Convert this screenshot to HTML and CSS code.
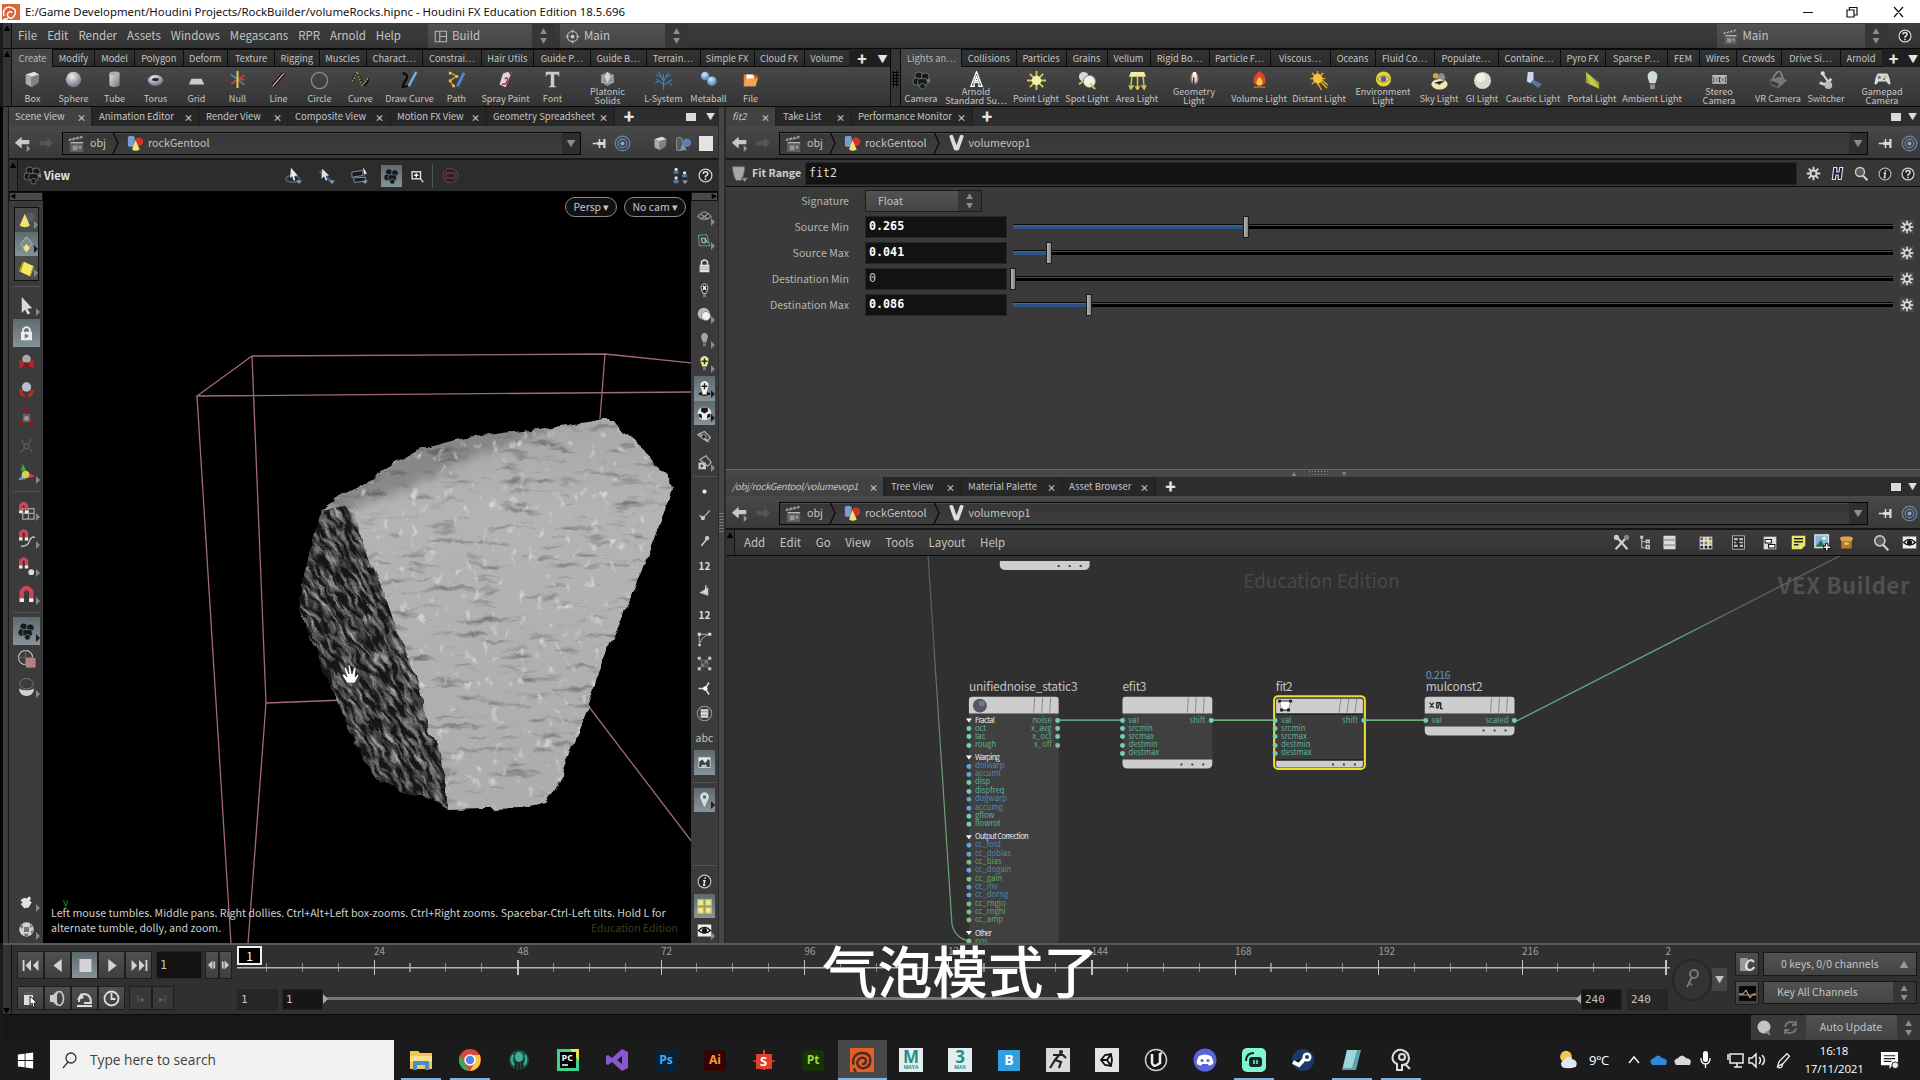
FILE: index.html
```
<!DOCTYPE html>
<html lang="en">
<head>
<meta charset="utf-8">
<title>volumeRocks.hipnc - Houdini FX</title>
<link rel="stylesheet" href="styles.css">
</head>
<body>
<svg class="sprite" width="0" height="0" aria-hidden="true">
<defs>
<linearGradient id="gGrey" x1="0" y1="0" x2="1" y2="1"><stop offset="0" stop-color="#e4e6ea"/><stop offset="1" stop-color="#6e7278"/></linearGradient>
<radialGradient id="gBall" cx=".4" cy=".3" r=".7"><stop offset="0" stop-color="#eef0f4"/><stop offset="1" stop-color="#6f757e"/></radialGradient>
<radialGradient id="gBlue" cx=".4" cy=".3" r=".7"><stop offset="0" stop-color="#d4e6ff"/><stop offset="1" stop-color="#4f7fb8"/></radialGradient>
</defs>
<symbol id="box" viewBox="0 0 20 20"><path fill="#dfe2e4" d="M2 4l10-3 6 3-9 3z"/><path fill="#a9adb0" d="M2 4l7 3v12l-7-4z"/><path fill="#7c8286" d="M9 7l9-3-1 10-8 5z"/></symbol>
<symbol id="sphere" viewBox="0 0 20 20"><circle cx="10" cy="10" r="9" fill="url(#gBall)"/></symbol>
<symbol id="tube" viewBox="0 0 20 20"><path fill="url(#gGrey)" d="M4 3v14q6 4 12 0V3z"/><ellipse cx="10" cy="3" rx="6" ry="2.4" fill="#aab0b6"/></symbol>
<symbol id="torus" viewBox="0 0 20 20"><ellipse cx="10" cy="11" rx="9" ry="6.500" fill="url(#gBall)"/><ellipse cx="10" cy="10" rx="4" ry="2" fill="#262b4a"/></symbol>
<symbol id="grid" viewBox="0 0 20 20"><path fill="#c9ccce" d="M4 9h12l3 7H1z"/></symbol>
<symbol id="null" viewBox="0 0 20 20"><path stroke="#4a84c8" stroke-width="2" d="M2 4l16 12M3 15l5-4"/><path stroke="#c33b3b" stroke-width="2.4" d="M18 5L3 15M10 10h8"/><path stroke="#d8cf40" stroke-width="2.4" d="M10 0v20"/></symbol>
<symbol id="line" viewBox="0 0 20 20"><path stroke="#63333a" stroke-width="1" d="M2 2h15M2 7h15M2 12h15M2 18h15M2 2v16M7 2v16M17 2v16"/><path stroke="#0c0c0c" stroke-width="4" d="M3 18L16 3"/><path stroke="#d9c9c9" stroke-width="1.4" d="M3 18L16 3"/></symbol>
<symbol id="circle" viewBox="0 0 20 20"><circle cx="10" cy="10" r="8.500" fill="none" stroke="#8b9096" stroke-width="1.3"/></symbol>
<symbol id="curve" viewBox="0 0 20 20"><path fill="none" stroke="#0e0e0e" stroke-width="2" d="M0 12Q5-4 10 10T20 8"/><path fill="none" stroke="#bba53c" stroke-dasharray="2 1.5" stroke-width="1.6" d="M0 12L6 1l6 16 8-10"/></symbol>
<symbol id="draw" viewBox="0 0 20 20"><path fill="none" stroke="#0a0a0a" stroke-width="2.4" d="M2 2q8 3 4 8t-4 9l8-2"/><path stroke="#4f8bd0" stroke-width="3.4" d="M18 1L9 18"/><path stroke="#b5d0ee" d="M18 1L9 18"/></symbol>
<symbol id="path" viewBox="0 0 20 20"><path fill="none" stroke="#d0a838" stroke-width="1.5" d="M3 2l7 4-8 6 5 6"/><path fill="#f0c440" d="M1 1h3v3H1zM9 5h3v3H9zM1 10h3v3H1zM5 16h3v3H5z"/><path stroke="#4f8bd0" stroke-width="3.2" d="M19 2l-8 16"/></symbol>
<symbol id="spray" viewBox="0 0 20 20"><path fill="#d8d8da" d="M7 3l6-2 3 4-6 14-7-3z"/><path fill="none" stroke="#c43040" stroke-width="2" d="M9 9q5-2 3 3t-6 3M15 1l3 3"/></symbol>
<symbol id="font" viewBox="0 0 20 20"><path fill="#c9ccd0" d="M2 1h16v6l-2-3h-4v13l3 2H5l3-2V4H4L2 7z"/></symbol>
<symbol id="platonic" viewBox="0 0 20 20"><path fill="#8d9194" d="M10 1l8 4v9l-8 5-8-5V5z"/><path fill="#d2d5d7" d="M10 1l4 6H6zM6 7h8l-4 8z"/><path fill="none" stroke="#c9c9c9" stroke-width=".7" d="M2 5l4 2-4 7 8 1 8-1-4-7 4-2"/></symbol>
<symbol id="lsys" viewBox="0 0 20 20"><path fill="none" stroke="#3d7fc0" stroke-width="1.2" d="M10 20v-9L5 1m5 10l5-9M10 14L2 8m8 7l9-6M7 6L2 4m11 2l5-2M10 11V3M5 10L1 13m14-1l4 3"/></symbol>
<symbol id="meta" viewBox="0 0 20 20"><circle cx="6" cy="6" r="5" fill="url(#gBlue)"/><circle cx="14" cy="12" r="5.600" fill="url(#gBlue)"/></symbol>
<symbol id="file" viewBox="0 0 20 20"><path fill="#e28630" d="M2 4h6l2 2h8l-2 12H2z"/><path fill="#fff" d="M5 4h9l1 9-9 1z"/><path fill="#f0a458" d="M2 18l2-9 15-1-3 10z"/><path fill="#e04c28" d="M12 3l7 3-3 4z"/></symbol>
<symbol id="cam" viewBox="0 0 20 20"><g fill="#15191c" stroke="#7c888e" stroke-width=".8"><circle cx="7" cy="5" r="4"/><circle cx="14" cy="6" r="4"/><circle cx="5" cy="11" r="4"/><rect x="6" y="8" width="10" height="7" rx="2"/><circle cx="11" cy="16" r="3"/></g><path fill="#727d82" d="M15 10l4-2v5z"/></symbol>
<symbol id="arnold" viewBox="0 0 20 20"><path fill="#080808" stroke="#fff" stroke-width="1.7" d="M10 1l7 18h-4v-5H7v5H3zM10 7l-2 5h4z"/></symbol>
<symbol id="sun" viewBox="0 0 20 20"><g stroke="#cfc950" stroke-width="2"><path d="M10 0v20M0 10h20M3 3l14 14M17 3L3 17"/></g><circle cx="10" cy="10" r="5" fill="#f1efa8"/></symbol>
<symbol id="spot" viewBox="0 0 20 20"><circle cx="6" cy="6" r="5" fill="#d8d8d8"/><circle cx="12" cy="11" r="6.400" fill="#f1f1ea" stroke="#7b7b7b"/><path stroke="#c9c94a" stroke-width="2" d="M13 13l5 6M1 14l4-3"/></symbol>
<symbol id="area" viewBox="0 0 20 20"><path fill="#f1eca0" d="M3 1h14l2 5H1z"/><path fill="none" stroke="#cfc64c" stroke-width="1.600" d="M4 6L3 18M10 6v13M16 6l1 12M1 15l2 4 3-4M8 16l2 4 2-4M14 15l3 4 2-4"/></symbol>
<symbol id="geo" viewBox="0 0 20 20"><ellipse cx="10" cy="9" rx="5" ry="8" fill="#ae7c80"/><ellipse cx="10" cy="8" rx="3" ry="6" fill="#f2e8c8"/><path stroke="#2b3972" stroke-width="2" d="M9 8v10"/><circle cx="10" cy="3" r="2" fill="#fff"/></symbol>
<symbol id="fire" viewBox="0 0 20 20"><path fill="#e0482a" d="M10 0q8 5 6 13-6 5-12 0Q2 6 10 0z"/><path fill="#f7c94a" d="M10 6q4 4 3 8-3 3-6 0-1-4 3-8z"/><path fill="#a9683f" d="M4 16h12v2H4z"/></symbol>
<symbol id="distant" viewBox="0 0 20 20"><path stroke="#d6a42c" stroke-width="1.6" d="M8 0v15M0 8h16M2 2l16 16M14 2L2 14M12 9l7 6M8 12l4 8"/><circle cx="8" cy="8" r="5" fill="#f5c542"/></symbol>
<symbol id="env" viewBox="0 0 20 20"><circle cx="10" cy="10" r="9.500" fill="#e2d43c"/><path fill="#ded9a6" stroke="#7b7430" d="M2 10q8-8 16 0-8 8-16 0z"/><circle cx="10" cy="10" r="3.400" fill="#59607a"/></symbol>
<symbol id="sky" viewBox="0 0 20 20"><circle cx="6" cy="5" r="3" fill="#e79a38"/><path fill="#8b8f94" d="M8 9q0-7 4-7t4 7z"/><ellipse cx="10" cy="14" rx="8.500" ry="5.500" fill="#efe6b4"/><path stroke="#5c5c50" stroke-width="1.4" d="M5 12l5 2 5-4"/></symbol>
<symbol id="gi" viewBox="0 0 20 20"><circle cx="10" cy="10" r="9" fill="#d5dbcf"/><circle cx="8" cy="7" r="5" fill="#eef0e8"/></symbol>
<symbol id="caustic" viewBox="0 0 20 20"><path fill="#cdd8ee" d="M4 1h6v9l-3 3-4-2z"/><path fill="#5a73a3" d="M7 12l3-3 9 5-4 4z"/></symbol>
<symbol id="portal" viewBox="0 0 20 20"><path fill="#9ba53a" d="M3 1l14 11v7L3 12z"/><path fill="#c3ca50" d="M3 1l6 5 8 12-10-4z"/></symbol>
<symbol id="bulb" viewBox="0 0 20 20"><path fill="#cfdcdc" d="M10 0q6 1 5 7-1 3-2 6H7q-1-3-2-6-1-6 5-7z"/><path fill="#8d8f90" d="M7.500 14h5v5h-5z"/></symbol>
<symbol id="stereo" viewBox="0 0 20 20"><path fill="#b8bbbd" d="M1 5h18v11H1z"/><path fill="#2b2d2f" d="M2 8h16v6H2z"/><circle cx="6" cy="11" r="3" fill="#888d90" stroke="#ddd"/><circle cx="14" cy="11" r="3" fill="#888d90" stroke="#ddd"/></symbol>
<symbol id="vr" viewBox="0 0 20 20"><path fill="none" stroke="#85888a" stroke-width="1.6" d="M4 8q6-12 9-5l2 5"/><path fill="#74797c" d="M1 9l11-3 7 4-9 8-8-3z"/><path fill="#3d4042" d="M2 10l8 3v4l-8-3z"/></symbol>
<symbol id="switch" viewBox="0 0 20 20"><circle cx="6" cy="2.500" r="2.200" fill="#ddd"/><path stroke="#d6d6d6" stroke-width="2" d="M6 3l7 10"/><path fill="none" stroke="#cfcfcf" stroke-width="3" d="M3 12q6 5 12-4"/><circle cx="12" cy="15" r="4" fill="#bbb"/></symbol>
<symbol id="pad" viewBox="0 0 20 20"><path fill="#d9dadb" d="M4 3h12q3 4 4 13-2 3-5-3H5q-3 6-5 3Q1 7 4 3z"/><circle cx="6" cy="8" r="2" fill="#77797b"/><circle cx="14" cy="7" r="1.500" fill="#e6a33c"/><circle cx="12" cy="10" r="1.500" fill="#77797b"/></symbol>
<symbol id="back" viewBox="0 0 20 20"><path fill="#c8c8c8" d="M1 9l8-7v4h9v5H9v5z"/><path fill="#9a9a9a" d="M15 12l4 4-4 4z"/></symbol>
<symbol id="fwd" viewBox="0 0 20 20"><path fill="#5a5a5a" d="M19 9l-7-6v4H3v5h9v4z"/></symbol>
<symbol id="clap" viewBox="0 0 20 20"><path fill="#5e5e5e" d="M2 5l14-3 1 3L3 8zM3 9h14v10H3z"/><path stroke="#b9b9b9" stroke-width="1.3" d="M2 7l2-2M6 6l2-2M10 5l2-2M14 4l2-2M4 9h13"/><path fill="#969696" d="M6 12h5v5H6zM12 13l3-1v4l-3-1z"/></symbol>
<symbol id="gprim" viewBox="0 0 20 20"><path fill="#7b9ccc" d="M1 2q4-2 8 0v11q-4 2-8 0z"/><circle cx="14" cy="8" r="5" fill="#d33329"/><path fill="#f3e27a" d="M10 6l5 11q-5 3-9 0z"/></symbol>
<symbol id="vee" viewBox="0 0 20 20"><path fill="none" stroke="#dcdcdc" stroke-width="4.500" stroke-linejoin="round" stroke-linecap="round" d="M4 2l5 14h2L16 2"/></symbol>
<symbol id="pin" viewBox="0 0 20 20"><path fill="#d8d8d8" d="M1 9h6V8h2V4h2v4h4V4h3v12h-3v-4h-4v4H9v-4H7v-1H1z"/></symbol>
<symbol id="target" viewBox="0 0 20 20"><g fill="none" stroke="#6580a0" stroke-width="1.600"><circle cx="10" cy="10" r="8.500"/><circle cx="10" cy="10" r="5"/></g><circle cx="10" cy="10" r="2.300" fill="#82a8d2"/></symbol>
<symbol id="help" viewBox="0 0 20 20"><circle cx="10" cy="10" r="8.500" fill="#242424" stroke="#d4d4d4" stroke-width="1.700"/><path fill="none" stroke="#e4e4e4" stroke-width="2.200" d="M7 8q0-3 3-3t3 2.500q0 2-3 3.500v1.500M10 14v2"/></symbol>
<symbol id="info" viewBox="0 0 20 20"><circle cx="10" cy="10" r="8.500" fill="#242424" stroke="#c4c4c4" stroke-width="1.500"/><path fill="none" stroke="#e4e4e4" stroke-width="2" d="M11 4.500l-.5 2M8 9h2.500L9 15h2"/></symbol>
<symbol id="gear" viewBox="0 0 20 20"><path stroke="#d6d6d6" stroke-width="2.500" d="M10 1v18M1 10h18M3.600 3.600l12.800 12.800M16.400 3.600L3.600 16.400"/><circle cx="10" cy="10" r="4" fill="#3a3a3a" stroke="#d6d6d6" stroke-width="2.500"/></symbol>
<symbol id="hlogo" viewBox="0 0 20 20"><path fill="#13213f" stroke="#dfe3ea" stroke-width="1.500" d="M3 18L5 2h4v6h3l1-6h4l-2 16h-4v-6H8l-1 6z"/></symbol>
<symbol id="mag" viewBox="0 0 20 20"><circle cx="8" cy="8" r="6" fill="#5a5a5a" stroke="#d0d0d0" stroke-width="1.800"/><path stroke="#d8d8d8" stroke-width="2.500" d="M12 13l6 6"/></symbol>
<symbol id="layout" viewBox="0 0 20 20"><path fill="none" stroke="#b4b4b4" stroke-width="1.500" d="M3 3h15v14H3zM9 3v14M9 10h9"/></symbol>
<symbol id="radial" viewBox="0 0 20 20"><circle cx="10" cy="10" r="7" fill="none" stroke="#b4b4b4" stroke-width="1.400"/><circle cx="10" cy="10" r="2.500" fill="#ccc"/><path stroke="#b4b4b4" stroke-width="2" d="M10 1v4M10 15v4M1 10h4M15 10h4"/></symbol>
<symbol id="orbit" viewBox="0 0 20 20"><ellipse cx="9" cy="14" rx="8" ry="4" fill="none" stroke="#45618a" stroke-width="2"/><path fill="#e8e8e8" d="M7 1l8 9-4 .5 1 5-2 .5-1.500-5L6 13z"/><path fill="#999" d="M13 16h7l-3.500 4z"/></symbol>
<symbol id="diag" viewBox="0 0 20 20"><path stroke="#3c5f88" stroke-width="3" d="M2 5l15 13"/><path fill="#e0e0e0" d="M5 2l8 8-4 .5 2 5-2 .5-2-5-3 3z"/><path fill="#999" d="M13 16h7l-3.500 4z"/></symbol>
<symbol id="shelf" viewBox="0 0 20 20"><path fill="#171c22" stroke="#8ba0b0" d="M1 6l13-2v6L1 12zM3 13l14-1v5l-13 1z"/><path fill="#e8e8e8" d="M14 0l5 8h-3v4z"/><path fill="#999" d="M13 16h7l-3.500 4z"/></symbol>
<symbol id="zoomf" viewBox="0 0 20 20"><path fill="#e2e2e2" d="M2 3h14v12H2z"/><path fill="#222" d="M4 5h10v8H4z"/><path stroke="#fff" stroke-width="2" d="M9 6v6M6 9h6"/><path stroke="#ccc" stroke-width="2" d="M15 14l4 5"/></symbol>
<symbol id="stopc" viewBox="0 0 20 20"><circle cx="10" cy="10" r="8.500" fill="#2b2224" stroke="#633a40" stroke-width="1.500"/><path fill="none" stroke="#633a40" stroke-width="1.700" d="M5 7h10v6H5z"/></symbol>
<symbol id="people" viewBox="0 0 20 20"><g fill="#d6dde6"><circle cx="6" cy="3" r="2"/><circle cx="16" cy="7" r="2"/><circle cx="6" cy="13" r="2"/></g><path fill="#4d79ae" d="M3 5h6v3H3zM13 9h6v3h-6zM3 15h6v4H3z"/><path fill="#999" d="M13 16h7l-3.500 4z"/></symbol>
<symbol id="ghost" viewBox="0 0 20 20"><path fill="#565a5c" stroke="#9a9fa2" d="M2 4q3-3 6 0l2 8-2 6H2z"/><circle cx="14" cy="9" r="5" fill="#5b7fb0"/><path fill="#8e9396" d="M9 10l5 8H6z"/></symbol>
<symbol id="funnel" viewBox="0 0 20 20"><path fill="#a7a7a7" stroke="#6b6b6b" d="M2 2h14v4l-2 8-2 4H6l-2-4-2-8z"/><path fill="#999" stroke="#333" stroke-width=".6" d="M12 15h8l-4 5z"/></symbol>
<symbol id="cone" viewBox="0 0 20 20"><circle cx="14" cy="6" r="5.500" fill="#555b60"/><path fill="#f0e470" d="M8 2l6 14q-6 4-12 0z"/></symbol>
<symbol id="diam" viewBox="0 0 20 20"><path fill="#7d8a8f" stroke="#b8c4c8" d="M10 1l7 8-7 9-7-9z"/><path fill="#f1e77c" d="M10 9l4 5-4 5-4-5z"/></symbol>
<symbol id="ycube" viewBox="0 0 20 20"><path fill="#f2ea5c" d="M7 2l11 5-4 12L3 14z"/><path fill="#b5a51e" d="M3 14L7 2 5 3 1 13zM14 19l4-12 1 1-4 11z"/></symbol>
<symbol id="arrow" viewBox="0 0 20 20"><path fill="#dadada" d="M5 1l11 12-5 .5 3 5-3 1-2.500-5L5 18z"/></symbol>
<symbol id="lock" viewBox="0 0 20 20"><path fill="none" stroke="#f0f0f0" stroke-width="2" d="M6 9V5q4-5 8 0v4"/><path fill="#ededed" d="M3.500 8h13v10h-13z"/><path fill="#66757b" d="M8 10l5 3-5 3z"/></symbol>
<symbol id="lock2" viewBox="0 0 20 20"><path fill="none" stroke="#e0e0e0" stroke-width="2" d="M6 10V5q4-5 8 0v5"/><path fill="#e2e2e2" d="M3.500 9h13v10h-13z"/><path stroke="#999" d="M4 12h12M4 15h12"/></symbol>
<symbol id="move" viewBox="0 0 20 20"><path fill="#b9222a" d="M1 8l6 2v5l-5 3zM19 8l-6 2v5l5 3z"/><circle cx="10" cy="7" r="5" fill="#a9a9ac"/><path fill="#7d1a20" d="M7 11h6v6H7z"/></symbol>
<symbol id="rot" viewBox="0 0 20 20"><path fill="#b4301f" d="M1 10q1 9 7 9v-3l-3-2 1-3zM19 10q-1 9-7 9v-3l3-2-1-3z"/><circle cx="10" cy="7" r="5.500" fill="#b9bfc8"/></symbol>
<symbol id="scl" viewBox="0 0 20 20"><path fill="#92141f" d="M8 0h4v5H8zM1 14l6-2-1 7zM19 14l-6-2 1 7z"/><path fill="#5e5e62" d="M6 6h8v9H6z"/><circle cx="10" cy="11" r="2.500" fill="#99999c"/></symbol>
<symbol id="pose" viewBox="0 0 20 20"><g fill="none" stroke="#5b5b5b" stroke-width="1.500"><circle cx="10" cy="11" r="3"/><path d="M4 3l3 5M15 2l-2 6M3 18l4-4M17 18l-3-4"/></g></symbol>
<symbol id="handle" viewBox="0 0 20 20"><path fill="#42a83c" d="M6 0l4 7H4z"/><path fill="#c83a46" d="M19 13l-7 2v-6z"/><path fill="#5d9ec8" d="M1 17l5-6 3 5z"/><circle cx="9" cy="11" r="4" fill="#d9ce4c"/></symbol>
<symbol id="mgrid" viewBox="0 0 20 20"><path fill="none" stroke="#a4a4a4" stroke-width="1.300" d="M6 8h12v11H6zM12 8v11M6 13h12"/><path fill="none" stroke="#d04557" stroke-width="3.600" d="M4 11V5q3-5 6 0v6"/><path stroke="#eee" stroke-width="3.600" d="M4 10v3M10 10v3"/></symbol>
<symbol id="mcurve" viewBox="0 0 20 20"><path fill="none" stroke="#b5c0bd" stroke-width="1.500" d="M4 18q7 1 9-5t6-4"/><path fill="none" stroke="#d04557" stroke-width="3.600" d="M4 10V4q3-4 6 0v6"/><path stroke="#eee" stroke-width="3.600" d="M4 9v3M10 9v3"/></symbol>
<symbol id="mpoint" viewBox="0 0 20 20"><circle cx="15" cy="16" r="3" fill="#ddd"/><path fill="none" stroke="#d04557" stroke-width="3.600" d="M4 10V4q3-4 6 0v6"/><path stroke="#eee" stroke-width="3.600" d="M4 9v3M10 9v3"/></symbol>
<symbol id="magnet" viewBox="0 0 20 20"><path fill="none" stroke="#d04557" stroke-width="4.600" d="M5 14V7q5-8 10 0v7"/><path stroke="#eee" stroke-width="4.600" d="M5 14v4M15 14v4"/></symbol>
<symbol id="globe" viewBox="0 0 20 20"><circle cx="9" cy="8" r="7.500" fill="none" stroke="#bdbdbd" stroke-width="1.300"/><path fill="none" stroke="#6d6d6d" d="M9 0v16M1 8h16"/><path fill="#a88486" stroke="#c98085" d="M10 9h9v9h-9z"/></symbol>
<symbol id="flip" viewBox="0 0 20 20"><ellipse cx="10" cy="6" rx="7" ry="5.500" fill="#3c3c3c" stroke="#777"/><path fill="#cad5d2" d="M2 11q8 4 16 0-1 8-8 8t-8-8z"/></symbol>
<symbol id="hand" viewBox="0 0 20 20"><path fill="#e2e2e2" d="M2 8l5-3 3 1 4-3 2 3-2 3 3 2-4 7-6 1-5-6 3-1z"/></symbol>
<symbol id="ball" viewBox="0 0 20 20"><circle cx="10" cy="10" r="8.500" fill="#d0d0d0"/><path fill="#747474" d="M7 7h6v6H7zM2 6l3-2 1 3-2 2zM14 3l3 4-3 1zM7 15h5v3H8zM15 12l3-1-2 5z"/></symbol>
<symbol id="eyeq" viewBox="0 0 20 20"><path fill="none" stroke="#9a9a9a" stroke-width="1.400" d="M1 10q9-12 18 0-9 8-18 0zM5 7l10 7M15 6L5 14"/></symbol>
<symbol id="clipg" viewBox="0 0 20 20"><path fill="none" stroke="#5b9a62" stroke-width="1.500" d="M2 3l11-1 4 15H3z"/><path fill="none" stroke="#a7cba6" stroke-width="1.500" d="M6 7h5v6H7zM11 8l3 5"/></symbol>
<symbol id="nobulb" viewBox="0 0 20 20"><path fill="#262626" stroke="#cfcfcf" stroke-width="1.300" d="M10 1q6 1 4 8l-2 5H8L6 9Q4 2 10 1z"/><path stroke="#fff" stroke-width="1.800" d="M8 4l4 5M12 4L8 9"/><path fill="#777" d="M8 15h4v4H8z"/></symbol>
<symbol id="disc" viewBox="0 0 20 20"><circle cx="9" cy="9" r="8" fill="#bbb"/><circle cx="12" cy="12" r="6" fill="#efefef" stroke="#777"/></symbol>
<symbol id="dbulb" viewBox="0 0 20 20"><path fill="#a5a5a5" d="M10 1q6 1 4 8l-2 5H8L6 9Q4 2 10 1z"/><path fill="#777" d="M8 15h4v4H8z"/></symbol>
<symbol id="ybulb" viewBox="0 0 20 20"><path fill="#f2eb9c" d="M10 0q7 1 5 8l-2 6H7L5 8Q3 1 10 0z"/><path stroke="#22331d" stroke-width="2" d="M10 3v8M6 7h8"/><path fill="#777" d="M8 15h4v4H8z"/></symbol>
<symbol id="bulbsh" viewBox="0 0 20 20"><ellipse cx="10" cy="17" rx="8" ry="2.500" fill="#111"/><path fill="#f4f4e4" d="M10 0q7 1 5 8l-2 6v4H7v-4L5 8Q3 1 10 0z"/><path stroke="#222" stroke-width="2" d="M10 3v8M6 7h8"/></symbol>
<symbol id="check" viewBox="0 0 20 20"><circle cx="10" cy="10" r="9" fill="#eee"/><path fill="#1b1b1b" d="M6 2h8l1 5-5 3-5-3zM2 10l4 1 1 6-5-3zM18 10l-4 1-1 6 5-3z"/></symbol>
<symbol id="lens" viewBox="0 0 20 20"><path fill="none" stroke="#b5b5b5" stroke-width="1.500" d="M1 6l9-4 8 8-5 5zM4 5l12 11"/><circle cx="9" cy="9" r="3" fill="#222" stroke="#ccc"/></symbol>
<symbol id="lensf" viewBox="0 0 20 20"><path fill="#c9c9c9" d="M2 10h10v9H2z"/><path fill="none" stroke="#b5b5b5" stroke-width="1.500" d="M4 6l8-5 7 9-5 5z"/><path fill="#333" d="M5 12l4 2.500-4 2.500z"/></symbol>
<symbol id="dot" viewBox="0 0 20 20"><circle cx="10" cy="10" r="2.500" fill="#f0f0f0"/></symbol>
<symbol id="norm" viewBox="0 0 20 20"><circle cx="7" cy="13" r="3" fill="#ddd"/><path stroke="#bbb" stroke-width="1.700" fill="none" d="M2 9l5 4L17 2"/></symbol>
<symbol id="vecn" viewBox="0 0 20 20"><path stroke="#ddd" stroke-width="2" d="M5 17L15 4"/><circle cx="13" cy="6" r="3" fill="#ccc"/></symbol>
<symbol id="trin" viewBox="0 0 20 20"><path fill="#c9c9c9" d="M3 13L15 6v11z"/><path stroke="#eee" stroke-width="1.500" d="M11 13L12 3"/></symbol>
<symbol id="hull" viewBox="0 0 20 20"><path fill="none" stroke="#aaa" stroke-width="1.300" d="M3 18V3h14Q6 6 4 15"/><path fill="#ddd" d="M1 1h4v4H1zM15 1h4v4h-4zM2 16h3v3H2z"/></symbol>
<symbol id="pts" viewBox="0 0 20 20"><path fill="#777" d="M5 5h10v10H5z"/><path fill="#ccc" d="M1 1h4v4H1zM15 1h4v4h-4zM1 15h4v4H1zM15 15h4v4h-4z"/><path fill="#444" d="M6 6h4v4H6zM10 10h4v4h-4z"/></symbol>
<symbol id="axis" viewBox="0 0 20 20"><path fill="none" stroke="#ddd" stroke-width="2" d="M2 10h9l5-8M11 10l5 8"/><circle cx="11" cy="10" r="3" fill="#fff"/></symbol>
<symbol id="menuc" viewBox="0 0 20 20"><circle cx="10" cy="10" r="8.500" fill="none" stroke="#999" stroke-width="1.200"/><path fill="#ddd" d="M5.500 5h9v10h-9z"/><path stroke="#777" d="M6 8h8M6 12h8"/></symbol>
<symbol id="pict" viewBox="0 0 20 20"><path fill="#e7e7e7" d="M2 3h16v14H2z"/><path fill="#38423f" d="M3 9l4-3 4 5 4-6 2 3v8H3z"/><path fill="#b9c8c4" d="M6 13h7v3H6z"/></symbol>
<symbol id="place" viewBox="0 0 20 20"><path fill="#cfd8dc" stroke="#eee" d="M10 2q6 1 4 7l-4 9-4-9q-2-6 4-7z"/><circle cx="10" cy="7" r="2" fill="#566"/></symbol>
<symbol id="quad" viewBox="0 0 20 20"><path fill="#efe79a" stroke="#c9bb3c" stroke-width="1.500" d="M2 2h7v7H2zM11 2h7v7h-7zM2 11h7v7H2zM11 11h7v7h-7z"/></symbol>
<symbol id="eye" viewBox="0 0 20 20"><path fill="#ededed" d="M1 2h18v16H1z"/><path fill="none" stroke="#111" stroke-width="1.600" d="M2 10q8-8 16 0-8 7-16 0z"/><circle cx="10" cy="10" r="3.400" fill="#111"/></symbol>
<symbol id="tools" viewBox="0 0 20 20"><path stroke="#d0d0d0" stroke-width="2.600" d="M3 2l14 16M17 3L3 18"/><circle cx="4" cy="4" r="3" fill="#ccc"/><circle cx="16" cy="4" r="3" fill="#888"/></symbol>
<symbol id="tree" viewBox="0 0 20 20"><path fill="none" stroke="#bbb" stroke-width="1.500" d="M5 3v14h5M5 9h5"/><path fill="#ccc" d="M3 1h4v4H3zM10 6h6v5h-6zM10 13h6v6h-6z"/><path fill="#444" d="M12 8h2v1h-2zM12 15h2v2h-2z"/></symbol>
<symbol id="list" viewBox="0 0 20 20"><path fill="#ddd" d="M2 1h16v18H2z"/><path fill="#a9a9a9" d="M2 5h16v3H2zM2 12h16v3H2z"/></symbol>
<symbol id="pal" viewBox="0 0 20 20"><path fill="#eee" d="M1 1h18v18H1z"/><path fill="#b33" d="M2 2h4v4H2z"/><path fill="#e0a23c" d="M8 2h4v4H8zM14 8h4v4h-4z"/><path fill="#4a9a4a" d="M14 2h4v4h-4zM8 8h4v4H8z"/><path fill="#3c66a8" d="M2 8h4v4H2z"/><path fill="#222" d="M2 14h4v4H2zM8 14h4v4H8zM14 14h4v4h-4z"/></symbol>
<symbol id="dgrid" viewBox="0 0 20 20"><path fill="#2b2b2b" stroke="#aaa" stroke-width="1.300" d="M2 1h16v18H2z"/><path fill="#bbb" d="M4 4h5v3H4zM11 4h5v3h-5zM4 9h3v2H4zM11 9h5v2h-5zM4 13h5v3H4zM12 13h4v3h-4z"/></symbol>
<symbol id="netb" viewBox="0 0 20 20"><path fill="#ddd" d="M1 1h18v18H1z"/><path fill="#fff" stroke="#111" stroke-width="1.500" d="M3 5h9v5H3zM8 12h9v5H8z"/></symbol>
<symbol id="note" viewBox="0 0 20 20"><path fill="#ebe36a" d="M1 1h18v13l-5 5H1z"/><path stroke="#222" stroke-width="1.700" d="M4 5h12M4 9h12M4 13h6"/></symbol>
<symbol id="imgp" viewBox="0 0 20 20"><path fill="#7fb7e0" stroke="#dfe8ee" stroke-width="1.500" d="M1 1h16v15H1z"/><path fill="#2f6d4a" d="M2 15l6-8 5 8z"/><circle cx="12" cy="5" r="2" fill="#fff4a8"/><path stroke="#111" stroke-width="4" d="M15 11v9M11 15.500h9"/><path stroke="#fff" stroke-width="1.700" d="M15 12v7M12 15.500h7"/></symbol>
<symbol id="crate" viewBox="0 0 20 20"><path fill="#b77a28" d="M3 8h14v10H3z"/><path fill="#e2a24a" d="M1 4l4-2h10l4 2-2 4H3z"/><path fill="#f0c070" d="M7 10h6v3H7z"/></symbol>
<symbol id="win" viewBox="0 0 20 20"><path fill="#fff" d="M1 3l8-1v7.500H1zM10 1.800L19 .5v9h-9zM1 10.500h8V18l-8-1zM10 10.500h9v9l-9-1.300z"/></symbol>
<symbol id="houdini" viewBox="0 0 20 20"><path fill="#e25f28" d="M0 0h20v20H0z"/><path fill="none" stroke="#4d2b20" stroke-width="2" d="M3 14Q1 6 9 4q8 0 8 6 0 6-6 7-5-1-5-5 1-4 5-4 3 1 2 4-1 2-3 1M3 17l2 3"/></symbol>
</svg>

<header class="titlebar">
  <svg class="app-logo"><rect width="18" height="16" fill="#d9663c"/><path fill="none" stroke="#fff" stroke-width="1.500" d="M2 12Q0 4 7 3q8 1 6 7-2 5-5 4-4-2-2-5 3-3 4 0M1 16q3-2 5-1"/></svg>
  <span class="title-text">E:/Game Development/Houdini Projects/RockBuilder/volumeRocks.hipnc - Houdini FX Education Edition 18.5.696</span>
  <svg class="win-buttons" viewBox="0 0 110 16"><path fill="none" stroke="#111" stroke-width="1.200" d="M3 8.500h10M47 6h7v7h-7zM49.500 6V3.500H57V11h-3M94 3l9 10M103 3l-9 10"/></svg>
</header>

<nav class="menubar">
  <div class="collapse"><i>▲</i></div>
  <div class="menus"><span>File</span><span>Edit</span><span>Render</span><span>Assets</span><span>Windows</span><span>Megascans</span><span>RPR</span><span>Arnold</span><span>Help</span></div>
  <div class="combo desk"><svg class="ico i15"><use href="#layout"/></svg>Build<b class="spin"><i>▲</i><i>▼</i></b></div>
  <div class="combo radial"><svg class="ico i15"><use href="#radial"/></svg>Main<b class="spin"><i>▲</i><i>▼</i></b></div>
  <div class="combo take"><svg class="ico i17"><use href="#clap"/></svg>Main<b class="spin"><i>▲</i><i>▼</i></b></div>
  <svg class="ico i14 menu-help"><use href="#help"/></svg>
</nav>

<section class="shelves">
  <div class="collapse"><i>▲</i></div>
  <div class="shelf">
    <div class="shelf-tabs left-tabs"><span class="on">Create</span><span>Modify</span><span>Model</span><span>Polygon</span><span>Deform</span><span>Texture</span><span>Rigging</span><span>Muscles</span><span>Charact…</span><span>Constrai…</span><span>Hair Utils</span><span>Guide P…</span><span>Guide B…</span><span>Terrain…</span><span>Simple FX</span><span>Cloud FX</span><span>Volume</span><em>✚</em><em>▼</em></div>
    <div class="tools left-tools">
      <div><svg class="ico i17"><use href="#box"/></svg><p>Box</p></div>
      <div><svg class="ico i17"><use href="#sphere"/></svg><p>Sphere</p></div>
      <div><svg class="ico i17"><use href="#tube"/></svg><p>Tube</p></div>
      <div><svg class="ico i17"><use href="#torus"/></svg><p>Torus</p></div>
      <div><svg class="ico i17"><use href="#grid"/></svg><p>Grid</p></div>
      <div><svg class="ico i17"><use href="#null"/></svg><p>Null</p></div>
      <div><svg class="ico i17"><use href="#line"/></svg><p>Line</p></div>
      <div><svg class="ico i19"><use href="#circle"/></svg><p>Circle</p></div>
      <div><svg class="ico i17"><use href="#curve"/></svg><p>Curve</p></div>
      <div><svg class="ico i17"><use href="#draw"/></svg><p>Draw Curve</p></div>
      <div><svg class="ico i17"><use href="#path"/></svg><p>Path</p></div>
      <div><svg class="ico i17"><use href="#spray"/></svg><p>Spray Paint</p></div>
      <div><svg class="ico i17"><use href="#font"/></svg><p>Font</p></div>
      <div class="two"><svg class="ico i17"><use href="#platonic"/></svg><p>Platonic<br>Solids</p></div>
      <div><svg class="ico i19"><use href="#lsys"/></svg><p>L-System</p></div>
      <div><svg class="ico i17"><use href="#meta"/></svg><p>Metaball</p></div>
      <div><svg class="ico i17"><use href="#file"/></svg><p>File</p></div>
    </div>
  </div>
  <div class="shelf-split"><i></i></div>
  <div class="shelf">
    <div class="shelf-tabs right-tabs"><span class="on">Lights an…</span><span>Collisions</span><span>Particles</span><span>Grains</span><span>Vellum</span><span>Rigid Bo…</span><span>Particle F…</span><span>Viscous…</span><span>Oceans</span><span>Fluid Co…</span><span>Populate…</span><span>Containe…</span><span>Pyro FX</span><span>Sparse P…</span><span>FEM</span><span>Wires</span><span>Crowds</span><span>Drive Si…</span><span>Arnold</span><em>✚</em><em>▼</em></div>
    <div class="tools right-tools">
      <div><svg class="ico i19"><use href="#cam"/></svg><p>Camera</p></div>
      <div class="two"><svg class="ico i17"><use href="#arnold"/></svg><p>Arnold<br>Standard Su…</p></div>
      <div><svg class="ico i19"><use href="#sun"/></svg><p>Point Light</p></div>
      <div><svg class="ico i19"><use href="#spot"/></svg><p>Spot Light</p></div>
      <div><svg class="ico i19"><use href="#area"/></svg><p>Area Light</p></div>
      <div class="two"><svg class="ico i17"><use href="#geo"/></svg><p>Geometry<br>Light</p></div>
      <div><svg class="ico i19"><use href="#fire"/></svg><p>Volume Light</p></div>
      <div><svg class="ico i19"><use href="#distant"/></svg><p>Distant Light</p></div>
      <div class="two"><svg class="ico i19"><use href="#env"/></svg><p>Environment<br>Light</p></div>
      <div><svg class="ico i19"><use href="#sky"/></svg><p>Sky Light</p></div>
      <div><svg class="ico i19"><use href="#gi"/></svg><p>GI Light</p></div>
      <div><svg class="ico i19"><use href="#caustic"/></svg><p>Caustic Light</p></div>
      <div><svg class="ico i19"><use href="#portal"/></svg><p>Portal Light</p></div>
      <div><svg class="ico i19"><use href="#bulb"/></svg><p>Ambient Light</p></div>
      <div class="two"><svg class="ico i19"><use href="#stereo"/></svg><p>Stereo<br>Camera</p></div>
      <div><svg class="ico i19"><use href="#vr"/></svg><p>VR Camera</p></div>
      <div><svg class="ico i19"><use href="#switch"/></svg><p>Switcher</p></div>
      <div class="two"><svg class="ico i19"><use href="#pad"/></svg><p>Gamepad<br>Camera</p></div>
    </div>
  </div>
</section>

<main class="desktop">
  <div class="stow"></div>

  <section class="pane scene">
    <div class="ptabs scene-tabs"><span class="on">Scene View<i>×</i></span><span>Animation Editor<i>×</i></span><span>Render View<i>×</i></span><span>Composite View<i>×</i></span><span>Motion FX View<i>×</i></span><span>Geometry Spreadsheet<i>×</i></span><em>✚</em><b class="maxi"></b><b class="drop">▼</b></div>
    <div class="pathrow">
      <svg class="ico i17"><use href="#back"/></svg><svg class="ico i17"><use href="#fwd"/></svg>
      <div class="pathbox"><svg class="ico i19"><use href="#clap"/></svg><span>obj</span><svg class="chev" viewBox="0 0 8 22"><path d="M1 0l5 11-5 11"/></svg><svg class="ico i17"><use href="#gprim"/></svg><span>rockGentool</span><b>▼</b></div>
      <div class="pathicons scene-icons"><svg class="ico i15"><use href="#pin"/></svg><svg class="ico i17"><use href="#target"/></svg><svg class="ico i15"><use href="#box"/></svg><svg class="ico i17"><use href="#ghost"/></svg><b class="white-sq"></b></div>
    </div>
    <div class="viewrow">
      <div class="collapse"><i>▲</i></div>
      <svg class="ico i19"><use href="#cam"/></svg><strong>View</strong>
      <div class="viewtools"><svg class="ico i17"><use href="#orbit"/></svg><svg class="ico i17"><use href="#diag"/></svg><svg class="ico i17"><use href="#shelf"/></svg><span class="pressed"><svg class="ico i17"><use href="#cam"/></svg></span><svg class="ico i14"><use href="#zoomf"/></svg><i class="vsep"></i><svg class="ico i17"><use href="#stopc"/></svg></div>
      <div class="viewright"><svg class="ico i17"><use href="#people"/></svg><svg class="ico i15"><use href="#help"/></svg></div>
    </div>
    <div class="viewbody">
      <div class="lbar">
        <div class="strip">◀</div>
        <div class="lgroup"><span class="fly"><svg class="ico i17"><use href="#cone"/></svg></span><span class="pressed fly"><svg class="ico i17"><use href="#diam"/></svg></span><span class="fly"><svg class="ico i17"><use href="#ycube"/></svg></span></div>
        <hr>
        <span class="fly"><svg class="ico i19"><use href="#arrow"/></svg></span><span class="pressed"><svg class="ico i17"><use href="#lock"/></svg></span><span><svg class="ico i17"><use href="#move"/></svg></span><span><svg class="ico i17"><use href="#rot"/></svg></span><span><svg class="ico i19"><use href="#scl"/></svg></span><span><svg class="ico i17"><use href="#pose"/></svg></span><span class="fly"><svg class="ico i19"><use href="#handle"/></svg></span>
        <hr>
        <span class="fly"><svg class="ico i19"><use href="#mgrid"/></svg></span><span class="fly"><svg class="ico i19"><use href="#mcurve"/></svg></span><span class="fly"><svg class="ico i19"><use href="#mpoint"/></svg></span><span class="fly"><svg class="ico i19"><use href="#magnet"/></svg></span>
        <hr>
        <span class="pressed fly"><svg class="ico i19"><use href="#cam"/></svg></span><span><svg class="ico i19"><use href="#globe"/></svg></span><span class="fly"><svg class="ico i19"><use href="#flip"/></svg></span>
        <div class="fill"></div>
        <span class="fly"><svg class="ico i15"><use href="#hand"/></svg></span><span class="fly"><svg class="ico i17"><use href="#ball"/></svg></span>
      </div>
      <div class="viewport">
        <svg class="render" viewBox="43 191 648 752">
          <defs>
            <clipPath id="darkFace"><path d="M320 508l-3 15-12 47-6 27 4 23 18 43 19 44 23 53 16 20 25 10 28 8 16 11-5-49-16-33-9-44-21-53-16-47-11-20-7-20-7-26-11-13z"/></clipPath>
            <clipPath id="lightFace"><path d="M320 508l17-11 30-15 19-15 29-17 44-12 46-6 34-4 35-5 23-4 18 0 10 14 18 15 11 15 17 15 1 12-11 28-23 61-7 18-21 46-13 34-9 30-16 40-10 26-7 17-9 11-23 6-75 2-5-2-14-47-16-33-9-44-21-53-16-47-11-20-7-20-7-26-11-11z"/></clipPath>
            <linearGradient id="faceG" x1="0" y1="0" x2="0" y2="1"><stop offset="0" stop-color="#a6a6a6"/><stop offset=".25" stop-color="#b4b4b4"/><stop offset="1" stop-color="#acacac"/></linearGradient>
            <filter id="striate" x="0" y="0" width="1" height="1" color-interpolation-filters="sRGB"><feTurbulence type="fractalNoise" baseFrequency=".055 .27" numOctaves="4" seed="8"/><feColorMatrix values="2.200 0 0 0 -.82  2.200 0 0 0 -.82  2.200 0 0 0 -.82  0 0 0 0 1"/></filter>
            <filter id="ripple" x="0" y="0" width="1" height="1" color-interpolation-filters="sRGB"><feTurbulence type="fractalNoise" baseFrequency=".028 .13" numOctaves="3" seed="3"/><feColorMatrix values="0 0 0 0 .15  0 0 0 0 .15  0 0 0 0 .15  0 2.600 0 0 -1.480"/></filter>
            <filter id="glint" x="0" y="0" width="1" height="1" color-interpolation-filters="sRGB"><feTurbulence type="fractalNoise" baseFrequency=".11 .08" numOctaves="2" seed="21"/><feColorMatrix values="0 0 0 0 .86  0 0 0 0 .86  0 0 0 0 .86  5 0 0 0 -3.150"/></filter>
            <filter id="ragged" x="-.05" y="-.05" width="1.1" height="1.1"><feTurbulence type="fractalNoise" baseFrequency=".07" numOctaves="2" seed="5"/><feDisplacementMap in="SourceGraphic" scale="8" xChannelSelector="R" yChannelSelector="G"/></filter>
            <filter id="soft"><feGaussianBlur stdDeviation="5"/></filter>
          </defs>
          <rect x="43" y="191" width="648" height="752" fill="#000"/>
          <path class="bbox" d="M252 355L605 353 692 362M252 355L197 395 692 391M197 395L231 943M252 355L266 702 248 943M266 702L345 699M605 353L599 430M580 694L692 841"/>
          <g filter="url(#ragged)">
            <g clip-path="url(#lightFace)">
              <rect x="290" y="410" width="400" height="410" fill="url(#faceG)"/>
              <path fill="#6e6e6e" opacity=".6" filter="url(#soft)" d="M318 503l47-27 60-40 110-15 20 8-80 26-65 31-70 26z"/>
              <rect x="290" y="410" width="400" height="410" filter="url(#ripple)" opacity=".5"/>
              <rect x="290" y="410" width="400" height="410" filter="url(#glint)" opacity=".8"/>
            </g>
            <g clip-path="url(#darkFace)"><rect x="290" y="480" width="180" height="350" fill="#2e2e2e"/><g transform="rotate(58 370 660)"><rect x="150" y="480" width="440" height="360" filter="url(#striate)" opacity=".6"/></g></g>
            <path class="edge" d="M342 518q2 30 14 45l11 20 16 47 21 53 9 44 16 33 14 47"/>
          </g>
          <path fill="#fff" stroke="#222" stroke-width=".6" d="M347 682l-5-8 2-1 3 3-3-9 2-1 3 7-1-9 2 0 2 9 2-7 2 1-1 9 3-3 1 1-4 8z"/>
        </svg>
        <div class="cams"><span>Persp ▾</span><span>No cam ▾</span></div>
        <i class="yaxis">y</i>
        <p class="hint">Left mouse tumbles. Middle pans. Right dollies. Ctrl+Alt+Left box-zooms. Ctrl+Right zooms. Spacebar-Ctrl-Left tilts. Hold L for<br>alternate tumble, dolly, and zoom.</p>
        <p class="edu">Education Edition</p>
      </div>
      <div class="rbar">
        <div class="strip">▶</div>
        <span class="fly"><svg class="ico i15"><use href="#eyeq"/></svg></span><span class="fly"><svg class="ico i15"><use href="#clipg"/></svg></span><span><svg class="ico i15"><use href="#lock2"/></svg></span><span><svg class="ico i15"><use href="#nobulb"/></svg></span><span class="fly"><svg class="ico i15"><use href="#disc"/></svg></span><span class="fly"><svg class="ico i15"><use href="#dbulb"/></svg></span><span class="fly"><svg class="ico i15"><use href="#ybulb"/></svg></span><span class="pressed fly"><svg class="ico i15"><use href="#bulbsh"/></svg></span><span class="pressed fly"><svg class="ico i15"><use href="#check"/></svg></span><span><svg class="ico i15"><use href="#lens"/></svg></span><span class="fly"><svg class="ico i15"><use href="#lensf"/></svg></span>
        <hr>
        <span><svg class="ico i17"><use href="#dot"/></svg></span><span><svg class="ico i14"><use href="#norm"/></svg></span><span><svg class="ico i14"><use href="#vecn"/></svg></span><span class="num">12</span><span><svg class="ico i15"><use href="#trin"/></svg></span><span class="num">12</span><span><svg class="ico i15"><use href="#hull"/></svg></span><span><svg class="ico i15"><use href="#pts"/></svg></span><span><svg class="ico i15"><use href="#axis"/></svg></span><span><svg class="ico i17"><use href="#menuc"/></svg></span><span class="abc">abc</span><span class="pressed"><svg class="ico i15"><use href="#pict"/></svg></span>
        <hr class="wide">
        <span class="pressed fly"><svg class="ico i17"><use href="#place"/></svg></span>
        <div class="fill"></div>
        <hr>
        <span><svg class="ico i15"><use href="#info"/></svg></span><span class="pressed"><svg class="ico i17"><use href="#quad"/></svg></span><span class="fly"><svg class="ico i15"><use href="#eye"/></svg></span>
      </div>
    </div>
  </section>

  <div class="vsplit"><i></i></div>

  <div class="rightcol">
    <section class="pane params">
      <div class="ptabs param-tabs"><span class="on it">fit2<i>×</i></span><span>Take List<i>×</i></span><span>Performance Monitor<i>×</i></span><em>✚</em><b class="maxi"></b><b class="drop">▼</b></div>
      <div class="pathrow">
        <svg class="ico i17"><use href="#back"/></svg><svg class="ico i17"><use href="#fwd"/></svg>
        <div class="pathbox"><svg class="ico i19"><use href="#clap"/></svg><span>obj</span><svg class="chev" viewBox="0 0 8 22"><path d="M1 0l5 11-5 11"/></svg><svg class="ico i17"><use href="#gprim"/></svg><span>rockGentool</span><svg class="chev" viewBox="0 0 8 22"><path d="M1 0l5 11-5 11"/></svg><svg class="ico i17"><use href="#vee"/></svg><span>volumevop1</span><b>▼</b></div>
        <div class="pathicons"><svg class="ico i15"><use href="#pin"/></svg><svg class="ico i17"><use href="#target"/></svg></div>
      </div>
      <div class="opname"><svg class="ico i17"><use href="#funnel"/></svg><strong>Fit Range</strong><div class="mono name-field">fit2</div><svg class="ico i15"><use href="#gear"/></svg><svg class="ico i15"><use href="#hlogo"/></svg><svg class="ico i15"><use href="#mag"/></svg><svg class="ico i14"><use href="#info"/></svg><svg class="ico i14"><use href="#help"/></svg></div>
      <div class="parms">
        <label>Signature</label><div class="combo sig">Float<b class="spin"><i>▲</i><i>▼</i></b></div>
        <label>Source Min</label><div class="mono field set">0.265</div><div class="slider"><u style="width:26.5%"></u><i></i></div><svg class="ico i14 pg"><use href="#gear"/></svg>
        <label>Source Max</label><div class="mono field set">0.041</div><div class="slider"><u style="width:4.1%"></u><i></i></div><svg class="ico i14 pg"><use href="#gear"/></svg>
        <label>Destination Min</label><div class="mono field">0</div><div class="slider"><u style="width:0%"></u><i></i></div><svg class="ico i14 pg"><use href="#gear"/></svg>
        <label>Destination Max</label><div class="mono field set">0.086</div><div class="slider"><u style="width:8.6%"></u><i></i></div><svg class="ico i14 pg"><use href="#gear"/></svg>
      </div>
    </section>
    <div class="hsplit">▴<i></i>▾</div>
    <section class="pane network">
      <div class="ptabs net-tabs"><span class="on it">/obj/rockGentool/volumevop1<i>×</i></span><span>Tree View<i>×</i></span><span>Material Palette<i>×</i></span><span>Asset Browser<i>×</i></span><em>✚</em><b class="maxi"></b><b class="drop">▼</b></div>
      <div class="pathrow">
        <svg class="ico i17"><use href="#back"/></svg><svg class="ico i17"><use href="#fwd"/></svg>
        <div class="pathbox"><svg class="ico i19"><use href="#clap"/></svg><span>obj</span><svg class="chev" viewBox="0 0 8 22"><path d="M1 0l5 11-5 11"/></svg><svg class="ico i17"><use href="#gprim"/></svg><span>rockGentool</span><svg class="chev" viewBox="0 0 8 22"><path d="M1 0l5 11-5 11"/></svg><svg class="ico i17"><use href="#vee"/></svg><span>volumevop1</span><b>▼</b></div>
        <div class="pathicons"><svg class="ico i15"><use href="#pin"/></svg><svg class="ico i17"><use href="#target"/></svg></div>
      </div>
      <div class="netmenu">
        <div class="collapse"><i>▲</i></div>
        <div class="menus"><span>Add</span><span>Edit</span><span>Go</span><span>View</span><span>Tools</span><span>Layout</span><span>Help</span></div>
        <div class="neticons"><svg class="ico i17"><use href="#tools"/></svg><svg class="ico i15"><use href="#tree"/></svg><svg class="ico i15"><use href="#list"/></svg><svg class="ico i14"><use href="#pal"/></svg><svg class="ico i15"><use href="#dgrid"/></svg><svg class="ico i14"><use href="#netb"/></svg><svg class="ico i15"><use href="#note"/></svg><svg class="ico i17"><use href="#imgp"/></svg><svg class="ico i15"><use href="#crate"/></svg><svg class="ico i17"><use href="#mag"/></svg><svg class="ico i15"><use href="#eye"/></svg></div>
      </div>
      <svg class="graph" viewBox="726 555 1194 388">
        <defs><linearGradient id="wireG" gradientUnits="userSpaceOnUse" x1="1515" y1="720" x2="1843" y2="554"><stop offset=".5" stop-color="#58a892"/><stop offset=".68" stop-color="#5c605e"/></linearGradient>
        <linearGradient id="wireL" gradientUnits="userSpaceOnUse" x1="0" y1="555" x2="0" y2="940"><stop offset=".2" stop-color="#5c605e"/><stop offset=".6" stop-color="#6aa477"/></linearGradient></defs>
        <text class="mark" x="1243" y="587" textLength="157">Education Edition</text>
        <text class="mark vex" x="1779" y="593" textLength="132">VEX Builder</text>
        <path fill="none" stroke="url(#wireL)" stroke-width="1.200" d="M927 554L951 924Q954 938 968 941"/>
        <path fill="none" stroke="url(#wireG)" stroke-width="1.300" d="M1515 720h3L1843 554"/>
        <path class="plate" d="M999 560h90v4q0 5-6 5h-78q-6 0-6-5z"/><path class="fdots" d="M1057 565h2M1068 565h2M1079 565h2"/>
        <path fill="none" stroke="#6fc7ae" stroke-width="1.400" d="M1057 719.500h65"/><path fill="none" stroke="#85d98f" stroke-width="1.400" d="M1211 719.500h64M1363 719.500h62"/>

        <text class="nname" x="968" y="690" textLength="109">unifiednoise_static3</text>
        <rect class="nbody" x="968" y="713" width="90" height="232"/><path class="plate" d="M968 713v-14q0-3 3-3h84q3 0 3 3v14z"/><circle cx="979" cy="705" r="7" fill="#565663"/><circle cx="981" cy="703" r="3" fill="#777786"/><path class="slash" d="M1034 697l-1 15M1042 697l-1 15M1050 697l-1 15"/>
        <g class="head"><text x="974" y="722.500" textLength="20">Fractal</text><text x="974" y="759.500" textLength="25">Warping</text><text x="974" y="839" textLength="54">Output Correction</text><text x="974" y="935.500" textLength="17">Other</text></g>
        <path fill="#fff" d="M965 718h6l-3 4zM965 755h6l-3 4zM965 835h6l-3 4zM965 931h6l-3 4z"/>
        <g class="teal"><text x="974" y="730">oct</text><text x="974" y="738">lac</text><text x="974" y="747">rough</text><text x="974" y="784">disp</text><text x="974" y="793">dispfreq</text><text x="974" y="818">gflow</text><text x="974" y="826">flowrot</text></g>
        <g class="blue"><text x="974" y="768">dolwarp</text><text x="974" y="776">accuml</text><text x="974" y="801">dogwarp</text><text x="974" y="810">accumg</text><text x="974" y="847">cc_fold</text><text x="974" y="856">cc_dobias</text><text x="974" y="872">cc_dogain</text><text x="974" y="889">cc_inv</text><text x="974" y="897">cc_dorng</text></g>
        <g class="green"><text x="974" y="864">cc_bias</text><text x="974" y="881">cc_gain</text><text x="974" y="906">cc_rnglo</text><text x="974" y="914">cc_rnghi</text><text x="974" y="922">cc_amp</text><text x="974" y="944">pos</text></g>
        <path class="pt teal" d="M968 728h0M968 736h0M968 745h0M968 782h0M968 791h0M968 816h0M968 824h0M1057 720h0M1057 728h0M1057 736h0"/>
        <path class="pt blue" d="M968 766h0M968 774h0M968 799h0M968 808h0M968 845h0M968 854h0M968 870h0M968 887h0M968 895h0"/>
        <path class="pt green" d="M968 862h0M968 879h0M968 904h0M968 912h0M968 920h0M968 941h0M1057 745h0"/>
        <g class="teal out"><text x="1051" y="722">noise</text><text x="1051" y="730">x_avg</text><text x="1051" y="738">x_oct</text></g><text class="green out" x="1051" y="747">x_off</text>

        <text class="nname" x="1122" y="690" textLength="24">efit3</text>
        <rect class="nbody" x="1122" y="713" width="90" height="46"/><path class="plate" d="M1122 713v-14q0-3 3-3h84q3 0 3 3v14zM1122 759h90v4q0 5-5 5h-80q-5 0-5-5z"/><path class="slash" d="M1188 697l-1 15M1196 697l-1 15M1204 697l-1 15"/><path class="fdots" d="M1180 764h2M1191 764h2M1202 764h2"/>
        <g class="teal"><text x="1128" y="722">val</text><text x="1128" y="730">srcmin</text><text x="1128" y="738">srcmax</text><text x="1128" y="747">destmin</text><text x="1128" y="755">destmax</text><text class="out" x="1205" y="722">shift</text></g>
        <path class="pt teal" d="M1122 720h0M1122 728h0M1122 736h0M1122 745h0M1122 753h0M1211 720h0"/>

        <text class="nname" x="1275" y="690" textLength="17">fit2</text>
        <rect x="1274.500" y="696" width="90.500" height="73" rx="4" fill="#3c3c3c"/><path class="plate" d="M1276 713v-13q0-2 2-2h83q2 0 2 2v13zM1276 760h87v4q0 3-3 3h-81q-3 0-3-3z"/><path class="slash" d="M1341 698l-2 14M1349 698l-2 14M1357 698l-2 14"/><path fill="#fff" stroke="#777" stroke-width=".7" d="M1279 700h12l-3 10h-6z"/><path fill="#222" d="M1278 699h3v3h-3zM1289 699h3v3h-3zM1280 708h3v3h-3zM1287 708h3v3h-3zM1280 700h10v.8h-10zM1282 709h6v.8h-6z"/><path stroke="#111" d="M1276 713.500h87M1276 759.500h87"/><path class="fdots" d="M1332 764h2M1343 764h2M1354 764h2"/>
        <rect x="1274" y="695.500" width="91" height="73" rx="4" fill="none" stroke="#f1df2c" stroke-width="2"/>
        <g class="teal"><text x="1281" y="722">val</text><text x="1281" y="730">srcmin</text><text x="1281" y="738">srcmax</text><text x="1281" y="747">destmin</text><text x="1281" y="755">destmax</text><text class="out" x="1358" y="722">shift</text></g>
        <path class="pt teal" d="M1275 720h0M1275 728h0M1275 736h0M1275 745h0M1275 753h0M1364 720h0"/>

        <text class="nval" x="1426" y="678" textLength="25">0.216</text><text class="nname" x="1426" y="690" textLength="57">mulconst2</text>
        <rect class="nbody" x="1425" y="713" width="90" height="13"/><path class="plate" d="M1425 713v-14q0-3 3-3h84q3 0 3 3v14zM1425 726h90v4q0 5-5 5h-80q-5 0-5-5z"/><path class="slash" d="M1492 697l-1 15M1500 697l-1 15M1508 697l-1 15"/><path class="fdots" d="M1483 730h2M1494 730h2M1505 730h2"/><path stroke="#222" fill="none" stroke-width="1.300" d="M1430 702l4 5M1434 702l-4 5M1437 708v-6h3l-2 6M1441 702v6h2"/>
        <g class="teal"><text x="1432" y="722">val</text><text class="out" x="1509" y="722">scaled</text></g><path class="pt teal" d="M1426 720h0M1515 720h0"/>
      </svg>
    </section>
  </div>
</main>

<section class="playbar">
  <div class="pb-grip"><i>▼</i></div>
  <div class="transport">
    <div class="tr1">
      <span class="btn"><svg class="gly" viewBox="0 0 20 14"><path d="M1 1h2v12H1zM10 1v12L4 7zM18 1v12l-6-6z"/></svg></span><span class="btn"><svg class="gly" viewBox="0 0 20 14"><path d="M14 0v14L5 7z"/></svg></span><span class="btn pressed"><svg class="gly" viewBox="0 0 20 14"><path d="M4 0h13v14H4z"/></svg></span><span class="btn"><svg class="gly" viewBox="0 0 20 14"><path d="M6 0v14l9-7z"/></svg></span><span class="btn"><svg class="gly" viewBox="0 0 20 14"><path d="M17 1h2v12h-2zM10 1v12l6-6zM2 1v12l6-6z"/></svg></span>
      <div class="mono field frame">1</div><span class="btn half"><svg class="hg" viewBox="0 0 9 10"><path d="M5 0v10L0 5zM6 1h2v8H6z"/></svg></span><span class="btn half"><svg class="hg" viewBox="0 0 9 10"><path d="M4 0v10l5-5zM1 1h2v8H1z"/></svg></span>
    </div>
    <div class="tr2">
      <span class="btn"><svg class="ico i19"><path fill="#ddd" d="M3 3h9v13H3z"/><path fill="#555" d="M3 3h9v3H3z"/><path fill="#fff" stroke="#222" d="M9 7l7 7h-3l1 4h-2l-1-4-2 2z"/></svg></span><span class="btn"><svg class="ico i17"><path fill="#ccc" d="M1 5h3l4-4v15l-4-4H1z"/><ellipse cx="10.500" cy="8.500" rx="4" ry="7" fill="none" stroke="#ccc" stroke-width="1.600"/></svg></span><span class="btn"><svg class="ico i17"><path fill="none" stroke="#ddd" stroke-width="2" d="M1 16h15M5 8h-3M3 12q0-8 6-8 6 1 6 9h-7"/><path fill="#ddd" d="M1 10l4-7 3 5z"/></svg></span><span class="btn"><svg class="ico i17"><circle cx="8.500" cy="8.500" r="7" fill="none" stroke="#ddd" stroke-width="1.800"/><path fill="none" stroke="#ddd" stroke-width="1.800" d="M8.500 3v6h4"/></svg></span>
      <span class="btn dim">I◂</span><span class="btn dim">▸I</span>
    </div>
  </div>
  <div class="timeline">
    <div class="labels"><span></span><span>24</span><span>48</span><span>72</span><span>96</span><span>120</span><span>144</span><span>168</span><span>192</span><span>216</span><span>2</span></div>
    <div class="ticks"></div>
    <div class="playhead">1</div>
    <div class="range"><div class="mono rfield dimf">1</div><div class="mono rfield">1</div><div class="rtrack"><i></i></div><div class="mono rfield">240</div><div class="mono rfield dimf">240</div></div>
  </div>
  <div class="keybtn"><svg viewBox="0 0 40 50"><ellipse cx="20" cy="25" rx="19" ry="20" fill="#333" stroke="#262626" stroke-width="2"/><circle cx="22" cy="19" r="4" fill="none" stroke="#777" stroke-width="2"/><path fill="none" stroke="#777" stroke-width="2" d="M20 22l-5 10M17 28l3 2"/></svg><b>▼</b></div>
  <div class="keyside">
    <span class="btn"><svg class="ico i17"><path fill="#999" d="M1 2h8v13H1z"/><path fill="none" stroke="#ddd" stroke-width="2.200" d="M15 6q-4-4-7 1t2 7q4 0 5-3"/></svg></span><div class="kbox">0 keys, 0/0 channels<b>▲</b></div>
    <span class="btn"><svg class="ico i17"><path fill="#080808" d="M0 1h17v15H0z"/><path fill="none" stroke="#ccc" d="M0 9h4l3-4 4 8 3-4h3"/><path fill="none" stroke="#c96" d="M0 10h17"/></svg></span><div class="kbox two">Key All Channels<b class="spin"><i>▲</i><i>▼</i></b></div>
  </div>
</section>

<footer class="status"><div class="cook"><svg class="ico i19"><circle cx="9" cy="9" r="6.500" fill="#c4c4c4"/><path fill="#8e8e8e" d="M10 14l5 4-1-6z"/></svg><svg class="ico i17"><path fill="none" stroke="#747474" stroke-width="1.800" d="M3 8q1-5 6-5 4 0 5 3M14 9q-1 5-6 5-4 0-5-3M14 2v4h-4M3 15v-4h4"/></svg></div><div class="auto">Auto Update</div><b class="spin"><i>▲</i><i>▼</i></b></footer>

<footer class="taskbar">
  <div class="start"><svg class="ico i17"><use href="#win"/></svg></div>
  <div class="search"><svg class="ico i19"><circle cx="11" cy="7" r="5" fill="none" stroke="#333" stroke-width="1.300"/><path stroke="#333" stroke-width="1.300" d="M8 11l-5 6"/></svg>Type here to search</div>
  <div class="apps">
    <span class="run"><svg viewBox="0 0 24 24"><path fill="#f4c64e" d="M1 3h8l2 2h12v16H1z"/><path fill="#ffdf86" d="M1 8h22v6H1z"/><path fill="#3f8fd2" d="M4 13h16v9h-4v-5H8v5H4z"/></svg></span>
    <span class="run"><svg viewBox="0 0 24 24"><circle cx="12" cy="12" r="11" fill="#e04434"/><path fill="#3ba55a" d="M2 7l7 12 3 4Q1 22 1 12z"/><path fill="#f7cd3f" d="M12 7h10q3 14-10 16l5-9z"/><circle cx="12" cy="12" r="5" fill="#4b86e8" stroke="#fff" stroke-width="1.500"/></svg></span>
    <span><svg viewBox="0 0 24 24"><circle cx="12" cy="12" r="10" fill="#175247"/><path fill="none" stroke="#1b1b1b" stroke-width="1.500" d="M12 14v8M9 13v8M15 13v8"/><path fill="none" stroke="#3fae94" stroke-width="2" d="M6 7q-3 6 1 10M18 7q3 6-1 10"/><ellipse cx="12" cy="9" rx="4" ry="5" fill="#3fae94"/></svg></span>
    <span><svg viewBox="0 0 24 24"><path fill="#3ed28b" d="M1 1h22v22H1z"/><path fill="#e9e452" d="M14 1h9v12z"/><path fill="#000" d="M4 4h16v16H4z"/><path stroke="#fff" stroke-width="1.500" d="M6 17h6"/><text x="5.500" y="13" font-size="9" font-weight="700" fill="#fff">PC</text></svg></span>
    <span><svg viewBox="0 0 24 24"><path fill="#8b57cf" d="M17 1l6 3v16l-6 3L7 14l-4 3-2-1V8l2-1 4 3zM17 8l-5 4 5 4z"/></svg></span>
    <span class="ps"><b>Ps</b></span><span class="ai"><b>Ai</b></span>
    <span><svg viewBox="0 0 24 24"><path fill="#e0402c" d="M4 6h16v15H4zM11 2h2v20h-2z"/><path stroke="#e0402c" stroke-width="1.500" d="M1 13h22"/><text x="8" y="18" font-size="13" font-weight="700" fill="#fff">S</text></svg></span>
    <span class="pt2"><b>Pt</b></span>
    <span class="run cur"><svg viewBox="0 0 20 20"><use href="#houdini"/></svg></span>
    <span class="maya"><b>M</b><i>MAYA</i></span><span class="maya"><b>3</b><i>MAX</i></span>
    <span class="bl"><b>B</b></span>
    <span><svg viewBox="0 0 24 24"><path fill="#d9d9d9" d="M0 0h24v24H0z"/><path fill="none" stroke="#222" stroke-width="2.200" d="M14 6l-5 6 6 2-2 6M9 12l-5 8M7 7h10l3 3"/><circle cx="15" cy="4" r="2" fill="#222"/></svg></span>
    <span><svg viewBox="0 0 24 24"><path fill="#e4e4e4" d="M0 0h24v24H0z"/><path fill="none" stroke="#111" stroke-width="1.800" d="M6 12l4-5 6-1 1 6-1 6-6-1zM6 12h6l4-6M12 12l4 6"/></svg></span>
    <span><svg viewBox="0 0 24 24"><circle cx="12" cy="12" r="10.500" fill="#141414" stroke="#ccc" stroke-width="1.500"/><path fill="none" stroke="#eee" stroke-width="2.500" d="M8 6v9q1 4 5 2l3-2V6l2-1"/></svg></span>
    <span><svg viewBox="0 0 24 24"><circle cx="12" cy="12" r="11.500" fill="#5865d8"/><path fill="#fff" d="M6 8q6-3 12 0 3 5 2 8-5 3-5 0H9q0 3-5 0-1-3 2-8z"/><circle cx="9" cy="12.500" r="1.600" fill="#5865d8"/><circle cx="15" cy="12.500" r="1.600" fill="#5865d8"/></svg></span>
    <span class="run"><svg viewBox="0 0 24 24"><rect width="24" height="24" rx="5" fill="#80f5d2"/><rect x="7" y="9" width="13" height="10" rx="3" fill="#17252b"/><path fill="none" stroke="#17252b" stroke-width="2" d="M4 13q0-8 8-8"/><path stroke="#80f5d2" stroke-width="1.500" d="M12 12v4M15 12v4"/></svg></span>
    <span><svg viewBox="0 0 24 24"><circle cx="12" cy="12" r="11" fill="#1b3a6a"/><path stroke="#fff" stroke-width="4" d="M2 14l6 3 7-8"/><circle cx="16" cy="9" r="4.500" fill="#fff"/><circle cx="16" cy="9" r="2" fill="#1b3a6a"/></svg></span>
    <span class="run"><svg viewBox="0 0 24 24"><path fill="#5aa2aa" d="M7 2h14l-5 20H2z"/><path fill="#9ed6d9" d="M7 2h10L12 20H3z"/></svg></span>
    <span class="run"><svg viewBox="0 0 24 24"><path fill="none" stroke="#ddd" stroke-width="2" d="M8 22V16Q2 13 4 7q3-6 9-5 7 2 7 9-1 6-7 6v5zM13 12a3 3 0 1 1 0-6 3 3 0 0 1 0 6zM16 16l5 5"/></svg></span>
  </div>
  <div class="tray">
    <svg class="wx" viewBox="0 0 24 24"><circle cx="9" cy="8" r="7" fill="#f0c455"/><path fill="#dde8f2" d="M5 21q-5-6 2-9 4-7 10-1 7 2 4 9-8 3-16 1z"/></svg><span class="temp">9°C</span>
    <svg class="ti" viewBox="0 0 160 20"><g fill="none" stroke="#eee" stroke-width="1.500"><path d="M5 13l5-6 5 6"/><path d="M106 4h13v9h-13zM110 17h8M113 13v4M104 4v6"/><path d="M125 8v5h3l4 4V4l-4 4zM135 7q3 3 0 7M138 5q5 5 0 10"/></g><path fill="#2c8ad8" d="M28 15q-4-5 2-7 4-5 8 0 7 1 4 7z"/><path fill="#d8d8d8" d="M52 15q-4-5 2-7 4-5 8 0 7 1 4 7z"/><rect x="79" y="1" width="5" height="11" rx="2.500" fill="#fff"/><path fill="none" stroke="#fff" stroke-width="1.300" d="M77 8q0 6 4.500 6T86 8M81.500 14v4"/></svg>
    <svg class="pen" viewBox="0 0 20 20"><path fill="none" stroke="#eee" stroke-width="1.500" d="M3 17l2-6 9-9 3 3-8 9zM3 18q6 2 6-4"/></svg>
    <div class="clock">16:18<br>17/11/2021</div>
    <svg class="notif" viewBox="0 0 20 20"><path fill="#fff" d="M1 1h18v14h-6l-3 4v-4H1z"/><path stroke="#222" stroke-width="1.300" d="M4 5h12M4 8h12M4 11h8"/><circle cx="16" cy="15" r="3.500" fill="#eee" stroke="#1b1b1b"/></svg>
  </div>
</footer>
<div class="subtitle">气泡模式了</div>
</body>
</html>
```
FILE: styles.css
```
* { box-sizing: border-box; }
body {
  margin: 0; width: 1920px; height: 1080px; overflow: hidden; position: relative;
  display: grid; grid-template-rows: 23px 26px 58px 836px 72px 25px 40px;
  background: #1a1a1a; color: #c4c4c4;
  font-family: "Noto Sans CJK SC", "Noto Sans", sans-serif; font-size: 10px; line-height: 1;
}
p { margin: 0; }
i, em, u { font-style: normal; text-decoration: none; }
.sprite { position: absolute; }
.ico { display: block; flex: none; overflow: visible; }
.i14 { width: 14px; height: 14px; } .i15 { width: 15px; height: 15px; }
.i17 { width: 17px; height: 17px; } .i19 { width: 19px; height: 19px; }
.mono { font-family: "DejaVu Sans Mono", "Liberation Mono", monospace; }

.titlebar { background: #fff; color: #111; display: flex; align-items: center; padding-left: 2px; font: 11.400px/1 "Noto Sans", "Open Sans", sans-serif; }
.app-logo { width: 19px; height: 16px; margin-right: 4px; }
.title-text { flex: 1; white-space: nowrap; padding-top: 1px; }
.win-buttons { width: 110px; height: 16px; margin-right: 11px; }

.collapse { width: 9px; background: #333; border-right: 1px solid #111; color: #000; font-size: 7px; text-align: center; padding-top: 2px; flex: none; }
.menubar { display: flex; align-items: stretch; margin-left: 3px; background: linear-gradient(#3e3e3e, #333); border-bottom: 1px solid #0a0a0a; font-size: 11.500px; }
.menus { display: flex; gap: 10px; align-items: center; padding: 0 0 0 6px; }
.menubar .menus { width: 416px; }
.combo { display: flex; align-items: center; background: linear-gradient(#525252, #444); position: relative; }
.menubar .combo { margin-top: 1px; gap: 4px; padding-left: 5px; }
.spin { display: flex; flex-direction: column; justify-content: center; align-items: center; gap: 2px; width: 23px; height: 100%; background: #363636; color: #8e8e8e; font-size: 7px; margin-left: auto; font-weight: 400; }
.desk { width: 127px; } .radial { width: 128px; margin-left: 5px; }
.take { width: 171px; margin-left: auto; }
.menu-help { margin: 6px 9px 0 10px; }

.shelves { display: flex; margin-left: 3px; border-bottom: 1px solid #080808; }
.shelf-tabs { display: grid; height: 18px; background: #262626; }
.shelf-tabs span { display: grid; place-items: center; background: linear-gradient(#333, #2a2a2a); border: 1px solid #0c0c0c; border-width: 1px 0 1px 1px; white-space: nowrap; font-size: 9.300px; padding-top: 2px; }
.shelf-tabs .on { background: #454545; border-color: transparent; color: #b9b9b9; }
.shelf-tabs em { display: grid; place-items: center; color: #e4e4e4; font-size: 10px; background: #1f1f1f; padding-top: 1px; }
.left-tabs { grid-template-columns: 40px 42px 40px 48.500px 44.500px 47px 44.500px 47px 56.500px 59px 51.500px 57.500px 55.500px 54px 54px 50px 45.500px 26px 15px; }
.right-tabs { grid-template-columns: 60px 54.500px 50px 41px 43px 59px 61px 60px 45px 59px 64px 62px 45px 62px 32px 37px 45px 59px 42px 24px 15px; }
.tools { display: grid; height: 39px; background: linear-gradient(#474747, #343434); font-size: 9.100px; }
.tools div { display: flex; flex-direction: column; align-items: center; justify-content: space-between; padding: 4px 0 3px; white-space: nowrap; text-align: center; min-width: 0; }
.tools p { line-height: 9px; }
.tools .two { padding-bottom: 1px; } .tools .two .ico { margin-bottom: -3px; height: 16px; }
.left-tools { grid-template-columns: repeat(9, 41px) 57px 37px 61px 33px 77px 35px 55px 29px 1fr; }
.right-tools { grid-template-columns: 40px 70px 50px 52px 48px 66px 64px 56px 72px 40px 46px 56px 62px 58px 76px 42px 54px 58px; }
.shelf:nth-child(2) { width: 878px; } .shelf:nth-child(4) { flex: 1; }
.shelf-split { width: 11px; border: 1px solid #0a0a0a; border-width: 0 1px; background: #353535; padding: 22px 1px 0; }
.shelf-split i { display: block; height: 16px; background: radial-gradient(circle, #000 1px, transparent 1.200px) 0 0 / 3px 3px; }

.desktop { display: grid; grid-template-columns: 9px 709px 8px 1194px; min-height: 0; }
.stow { background: #3c3c3c; border-left: 3px solid #000; border-right: 1px solid #1a1a1a; }
.pane { display: flex; flex-direction: column; min-height: 0; }
.ptabs { display: grid; height: 19px; background: #2d2d2d; font-size: 9.500px; flex: none; }
.ptabs span { display: flex; align-items: center; justify-content: space-between; padding: 1px 5px 0 6px; background: #272727; border-right: 2px solid #222; white-space: nowrap; }
.ptabs span i { font-weight: 700; font-size: 9px; letter-spacing: 0; }
.ptabs .on { background: #424242; } .ptabs .it { font-style: italic; }
.ptabs em { display: grid; place-items: center; color: #e4e4e4; font-size: 11px; }
.maxi { width: 10px; height: 8px; background: #dadada; align-self: center; }
.drop { color: #ddd; font-size: 9px; align-self: center; text-align: right; padding-right: 3px; }
.scene-tabs { grid-template-columns: 84px 107px 89px 102px 96px 128px 28px 53px 22px; }
.param-tabs { grid-template-columns: 51px 75px 121px 28px 1fr 19px; }
.net-tabs { grid-template-columns: 159px 77px 101px 93px 29px 1fr 19px; }
.net-tabs .it { letter-spacing: -.33px; }
.ptabs .maxi { justify-self: end; }

.pathrow { display: flex; align-items: center; height: 34px; background: linear-gradient(#484848, #393939); border-bottom: 2px solid #161616; padding: 2px 0 0 5px; flex: none; }
.pathrow > .ico { margin-right: 6px; }
.pathrow > .ico + .ico { margin-right: 8px; opacity: .8; }
.pathbox { flex: 1; height: 23px; display: flex; align-items: center; border: 1px solid #050505; background: linear-gradient(#363636, #3d3d3d); font-size: 10.700px; padding-left: 4px; box-shadow: inset 0 1px #4d4d4d; }
.pathbox span { margin: 0 6px 0 4px; }
.chev { width: 8px; height: 22px; margin-right: 7px; fill: none; stroke: #0b0b0b; stroke-width: 1.300; }
.pathbox b { margin-left: auto; background: #2e2e2e; width: 18px; line-height: 21px; text-align: center; font-size: 9px; color: #8d8d8d; }
.pathicons { display: flex; width: 52px; justify-content: space-between; align-items: center; padding: 0 2px 0 10px; }
.scene-icons { width: 137px; padding: 0 5px 0 11px; }
.scene-icons .ico:nth-child(3) { margin-left: 14px; }
.white-sq { width: 14px; height: 15px; background: #e3e3e3; }

.viewrow { height: 32px; display: flex; align-items: center; background: #2c2c2c; border-bottom: 1px solid #060606; flex: none; font-size: 11px; }
.viewrow .collapse { align-self: stretch; margin-right: 5px; }
.viewrow strong { margin-left: 2px; color: #e6e6e6; }
.viewtools { display: flex; align-items: center; align-self: stretch; margin-left: 215px; gap: 16px; }
.viewtools .pressed { width: 21px; align-self: stretch; margin: 5px -8px 4px -3px; display: grid; place-items: center; }
.pressed { background: linear-gradient(#5d6a70, #86949a); }
.vsep { width: 1px; height: 24px; background: #555; margin: 0 -7px 0 -8px; }
.viewright { display: flex; gap: 10px; margin-left: auto; padding-right: 5px; align-items: center; }

.viewbody { flex: 1; display: grid; grid-template-columns: 34px 648px 27px; min-height: 0; }
.strip { height: 9px; background: #4a4a4a; border: 1px solid #111; color: #000; font-size: 6px; align-self: stretch; }
.lbar, .rbar { display: flex; flex-direction: column; align-items: center; background: #3b3b3b; min-height: 0; }
.lbar > span { height: 28px; width: 27px; display: grid; place-items: center; flex: none; }
.lgroup { margin-top: 6px; width: 25px; border: 1px solid #111; background: #4b4b4b; }
.lgroup span { height: 24px; display: grid; place-items: center; }
.fly { position: relative; }
.fly::after { content: ""; position: absolute; right: 0; bottom: 3px; border: 4px solid #0000; border-left-color: #8a8a8a; border-right: 0; }
.fly.pressed::after { border-left-color: #1c1c1c; }
.lbar hr, .rbar hr { width: 27px; border: 0; border-top: 1px solid #575757; margin: 5px 0 4px; flex: none; }
.lbar hr { margin: 4px 0; } .lbar .lgroup + hr { margin: 5px 0 4px; }
.fill { flex: 1; }
.rbar > span { height: 24.600px; width: 21px; display: grid; place-items: center; flex: none; }
.rbar .strip { height: 9px; margin-bottom: 3px; text-align: right; }
.rbar hr { width: 23px; margin: 1px 0 3px; }
.rbar .wide { margin: 7px 0 5px; }
.num { font-size: 10px; font-weight: 700; color: #ddd; } .abc { font-size: 10.500px; }
.viewport { position: relative; background: #000; overflow: hidden; }
.render { display: block; width: 648px; height: 752px; }
.bbox { fill: none; stroke: #a3697a; stroke-width: 1.300; }
.edge { fill: none; stroke: #777; stroke-width: 3; opacity: .5; }
.cams { position: absolute; top: 5px; right: 5px; display: flex; gap: 7px; }
.cams span { height: 20px; padding: 0 7px; border: 1px solid #8a8a8a; border-radius: 10px; line-height: 18px; font-size: 10.500px; background: #111; }
.yaxis { position: absolute; left: 20px; top: 705px; color: #1f8a25; font-size: 10px; }
.hint { position: absolute; left: 8px; top: 713px; font-size: 10.650px; line-height: 15px; color: #cfcfcf; white-space: nowrap; }
.edu { position: absolute; right: 13px; top: 731px; font-size: 10.500px; color: #3d3f24; }

.vsplit { background: #464646; border: 1px solid #2a2a2a; border-width: 0 2px 0 1px; padding-top: 405px; }
.vsplit i { display: block; height: 20px; background: radial-gradient(circle, #888 .7px, transparent 1px) 0 0 / 2.500px 3px; }
.rightcol { display: grid; grid-template-rows: 363px 7px 466px; min-height: 0; }

.opname { display: flex; align-items: center; height: 27px; background: #363636; border-bottom: 1px solid #0b0b0b; padding: 1px 5px 0 5px; gap: 9px; font-size: 10.700px; flex: none; }
.opname strong { color: #d0d0d0; margin: 0 -5px 0 -5px; width: 49px; white-space: nowrap; }
.name-field { flex: 1; height: 23px; background: #131313; border: 1px solid #262626; line-height: 20px; padding-left: 3px; color: #ddd; font-size: 11.700px; }
.parms { flex: 1; background: #3a3a3a; display: grid; grid-template-columns: 123px 158px 1fr 20px; grid-auto-rows: 26px; padding: 1px 0 0; align-content: start; align-items: center; border-bottom: 1px solid #666; }
.parms label { grid-column: 1; text-align: right; font-size: 10.600px; color: #b4b4b4; }
.parms .combo, .field { margin-left: 16px; }
.sig { width: 117px; height: 22px; border: 1px solid #1c1c1c; padding-left: 12px; font-size: 10.600px; }
.field { height: 22px; background: #121212; border: 1px solid #262626; line-height: 19px; padding-left: 3px; font-size: 11.700px; }
.set { font-weight: 700; color: #fff; }
.slider { height: 22px; margin: 0 7px 0 6px; display: flex; align-items: center; background: linear-gradient(#0000 8px, #080808 8px 9px, #4a4a4a 9px 10px, #000 10px 13px, #0000 13px); }
.slider u { height: 4px; background: #2c5286; border-top: 1px solid #47699a; }
.slider i { width: 4px; height: 20px; margin-left: -3px; flex: none; background: linear-gradient(90deg, #b4b4b4, #848484); border: 1px solid #1c1c1c; box-sizing: content-box; }
.pg { background: #4a4a4a; }
.hsplit { display: flex; justify-content: center; gap: 12px; background: #484848; color: #888; font-size: 8px; line-height: 6px; padding-right: 8px; }
.hsplit i { width: 22px; background: radial-gradient(circle, #888 .7px, transparent 1px) 0 0 / 3px 3px; }

.netmenu { height: 26px; display: flex; align-items: stretch; background: linear-gradient(#3d3d3d, #333); border-bottom: 1px solid #0c0c0c; font-size: 11.500px; flex: none; }
.netmenu .menus { gap: 14.600px; padding-left: 9px; }
.neticons { margin: 0 1px 0 auto; display: grid; grid-template-columns: 24px 24px 32px 33px 32px 32px 24px 25px 32px 32px 20px; place-items: center; }
.neticons .ico:nth-child(3) { margin-right: 8px; } .neticons .ico:nth-child(9) { margin-right: 10px; }
.neticons .ico:nth-child(10) { margin-right: 4px; }
.graph { display: block; width: 1194px; height: 387px; background: #303030; font-size: 7.700px; }
.mark { font-size: 19px; fill: #484848; } .vex { font-size: 22px; font-weight: 700; fill: #505050; }
.nname { font-size: 12px; fill: #c2c2c2; } .nval { font-size: 11px; fill: #6d8fc0; }
.plate { fill: #cdcdcd; } .nbody { fill: #404040; }
.slash { fill: none; stroke: #8a8a8a; stroke-width: 1; } .fdots { stroke: #444; stroke-width: 2; }
.head { fill: #e2e2e2; } .teal { fill: #5fae98; } .blue { fill: #4c88b6; } .green { fill: #62a36d; }
.out { text-anchor: end; }
.pt { stroke-width: 5; stroke-linecap: round; }
.pt.teal { stroke: #75cdb5; } .pt.blue { stroke: #63a5d8; } .pt.green { stroke: #7fbf86; }

.playbar { display: flex; background: #303030; border-top: 2px solid #5a5a5a; border-bottom: 1px solid #0a0a0a; margin-left: 3px; }
.pb-grip { width: 9px; background: #333; border-right: 1px solid #111; color: #000; font-size: 7px; display: flex; align-items: flex-end; }
.transport { width: 225px; padding: 6px 0 0 5px; }
.tr1, .tr2 { display: flex; }
.btn { width: 27px; height: 28px; display: grid; place-items: center; background: linear-gradient(#505050, #3e3e3e); border: 1px solid #1e1e1e; flex: none; color: #ccc; }
.gly { width: 20px; height: 13px; fill: #d4d4d4; }
.hg { width: 8px; height: 10px; fill: #ccc; }
.btn.pressed { background: linear-gradient(#5d6a70, #86949a); }
.half { width: 13.500px; font-size: 12px; }
.frame { width: 46px; height: 28px; margin: 0 3px 0 4px; line-height: 26px; }
.tr2 { padding-top: 7px; } .tr2 .btn { height: 24px; }
.tr2 .dim { width: 22.500px; color: #606060; background: #383838; font-size: 9px; } .btn:not(.dim) + .dim { margin-left: 4px; }
.timeline { width: 1434px; position: relative; display: flex; flex-direction: column; overflow: hidden; }
.labels { display: flex; height: 11px; align-items: flex-end; color: #9d9d9d; font-size: 10px; }
.labels span { width: 143.500px; flex: none; } .labels span:first-child { width: 137px; } .labels span:last-child { width: 7px; }
.ticks { position: relative; height: 28px; margin-top: 2px; width: 1433px; background:
  linear-gradient(#b4b4b4, #b4b4b4) 0 9px / 100% 1.500px no-repeat,
  repeating-linear-gradient(90deg, #888 0 1px, #0000 1px 35.875px) 29px 5px / 100% 9px no-repeat;
}
.ticks::after { content: ""; position: absolute; inset: 2px 0 11px 136.500px; background: repeating-linear-gradient(90deg, #c4c4c4 0 1px, #0000 1px 143.500px); }
.playhead { position: absolute; left: 0; top: 1px; width: 25px; height: 19px; border: 2px solid #f0f0f0; background: #000; color: #fff; text-align: center; font-size: 12px; line-height: 15px; }
.range { display: flex; align-items: center; height: 22px; margin-top: 2px; }
.rfield { width: 41px; height: 21px; background: #161616; border: 1px solid #242424; line-height: 19px; padding-left: 3px; font-size: 11px; flex: none; }
.dimf { background: #262626; } .rfield:first-child { margin-right: 4px; } .rfield:last-child { margin-left: 5px; }
.rtrack { flex: none; width: 1258px; height: 10px; display: flex; align-items: center; background: linear-gradient(#0000 3px, #777 3px 6px, #0000 6px); justify-content: space-between; }
.rtrack::before, .rtrack::after { content: ""; border: 5px solid #0000; border-left-color: #a8a8a8; border-right: 0; height: 0; }
.rtrack::after { border-right: 5px solid #a8a8a8; border-left: 0; }
.rtrack i { flex: 1; }
.keybtn { display: flex; align-items: center; width: 61px; padding-left: 1px; }
.keybtn svg { width: 40px; height: 50px; } .keybtn b { background: #444; padding: 7px 3px; font-size: 9px; }
.keyside { flex: 1; display: grid; grid-template-columns: 28px 1fr; grid-auto-rows: 24px; row-gap: 5px; padding: 7px 4px 0 3px; }
.keyside .btn { width: 24px; height: 24px; }
.kbox { border: 1px solid #181818; background: linear-gradient(#525252, #444); display: flex; align-items: center; font-size: 10.500px; padding-left: 17px; }
.kbox > b:not(.spin) { margin: 0 7px 0 auto; color: #999; font-size: 9px; } .kbox.two { padding-left: 13px; height: 23px; }

.status { background: #171717; display: flex; margin-left: 3px; }
.cook { width: 55px; margin-left: auto; background: #3a3a3a; display: flex; align-items: center; gap: 8px; padding-left: 4px; }
.auto { width: 91px; background: linear-gradient(#505050, #424242); display: grid; place-items: center; font-size: 10.700px; }
.status .spin { margin-left: 0; width: 24px; }

.taskbar { background: #1b1b1b; display: flex; align-items: stretch; color: #fff; font-family: "Open Sans", "Noto Sans", sans-serif; }
.start { width: 50px; display: grid; place-items: center; }
.search { width: 344px; background: #f2f2f2; color: #404040; display: flex; align-items: center; gap: 11px; padding-left: 10px; font-size: 13.700px; }
.apps { display: flex; padding-left: 2.500px; width: 1159px; }
.apps span { width: 49px; display: grid; place-items: center; position: relative; }
.apps svg { width: 24px; height: 24px; }
.run { background: linear-gradient(#7eb4df, #7eb4df) center bottom / 40px 2px no-repeat; }
.cur { background: linear-gradient(#7eb4df, #7eb4df) bottom / 100% 2px no-repeat, #484848; }
.apps b { width: 22px; height: 21px; border-radius: 3px; display: grid; place-items: center; font-size: 12px; }
.ps b { background: #062238; color: #4aa6f0; } .ai b { background: #330505; color: #f39a28; } .pt2 b { background: #173004; color: #95da3c; }
.apps .maya { align-content: center; } .maya b { background: #e5eeee; color: #1f8f8c; font-size: 17px; border-radius: 0; width: 24px; height: 17px; }
.maya i { background: #e5eeee; color: #1f8f8c; font-size: 5px; width: 24px; text-align: center; height: 7px; font-weight: 700; }
.bl b { background: #2f9fe0; border-radius: 0; font-size: 14px; }
.tray { flex: 1; display: flex; align-items: center; }
.wx { width: 23px; height: 20px; margin: 0 9px 0 4px; } .temp { font-size: 13px; width: 35px; letter-spacing: -.5px; }
.ti { width: 160px; height: 20px; flex: none; } .pen { width: 17px; height: 17px; margin-left: -9px; }
.clock { width: 84px; text-align: center; font-size: 11.500px; line-height: 18px; letter-spacing: -.2px; }
.notif { width: 19px; height: 19px; margin-left: 4px; }
.subtitle { position: absolute; left: 822px; top: 940px; font-size: 55.300px; line-height: 58px; font-weight: 500; color: #fff; white-space: nowrap; }
```
